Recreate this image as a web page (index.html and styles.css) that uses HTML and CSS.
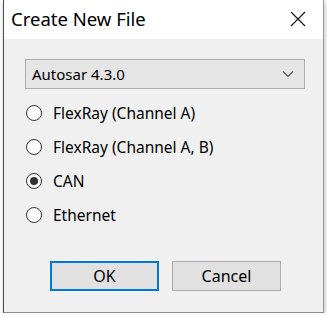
FILE: index.html
```html
<!DOCTYPE html>
<html lang="en">

<head>
    <meta charset="UTF-8">
    <meta name="viewport" content="width=device-width, initial-scale=1.0">
    <title>Create New File</title>
    <link rel="stylesheet" href="styles.css">
</head>

<body>
    <div class="window">
        <div class="titlebar">
            <span class="title">Create New File</span>
            <button class="close" aria-label="Close">
                <svg width="16" height="16" viewBox="0 0 16 16">
                    <path d="M1 1 L15 15 M15 1 L1 15" stroke="#111" stroke-width="1.1" fill="none" />
                </svg>
            </button>
        </div>

        <div class="content">
            <div class="combo">
                <span>Autosar 4.3.0</span>
                <svg class="chevron" width="12" height="8" viewBox="0 0 12 8">
                    <path d="M1 1.5 L6 6.5 L11 1.5" stroke="#555" stroke-width="1.2" fill="none" />
                </svg>
            </div>

            <div class="options">
                <label class="option"><span class="radio"></span>FlexRay (Channel A)</label>
                <label class="option"><span class="radio"></span>FlexRay (Channel A, B)</label>
                <label class="option"><span class="radio checked"></span>CAN</label>
                <label class="option"><span class="radio"></span>Ethernet</label>
            </div>

            <div class="buttons">
                <button class="btn default">OK</button>
                <button class="btn">Cancel</button>
            </div>
        </div>
    </div>
</body>

</html>
```

FILE: styles.css
```css
body {
    margin: 0;
    background-color: #ffffff;
    font-family: "Noto Sans", "Open Sans", sans-serif;
}

.window {
    margin-left: 3px;
    width: 319px;
    height: 312px;
    border-left: 1px solid #4a4a4a;
    border-right: 1px solid #9a9a9a;
    border-bottom: 1px solid #8a8a8a;
    box-shadow: 1px 2px 5px rgba(0, 0, 0, 0.25);
    display: flex;
    flex-direction: column;
}

.titlebar {
    height: 39px;
    background-color: #ffffff;
    display: flex;
    align-items: center;
    justify-content: space-between;
    padding-left: 7px;
    padding-right: 17px;
}

.title {
    font-size: 18.5px;
    color: #000;
    margin-top: -3px;
}

.close {
    border: none;
    background: none;
    padding: 0;
    width: 16px;
    height: 16px;
    margin-top: -2px;
}

.content {
    flex: 1;
    background-color: #f0f0f0;
    padding: 20px 18px 0 21px;
}

.combo {
    height: 28px;
    border: 1px solid #adadad;
    background-color: #e5e5e5;
    display: flex;
    align-items: center;
    justify-content: space-between;
    padding: 0 10px 0 6px;
    font-size: 15px;
    color: #000;
}

.options {
    margin-top: 7px;
}

.option {
    height: 34px;
    display: flex;
    align-items: center;
    font-size: 15.5px;
    color: #000;
    padding-left: 1px;
}

.radio {
    width: 14px;
    height: 14px;
    border: 1px solid #333;
    border-radius: 50%;
    background-color: #fff;
    margin-right: 11px;
    display: flex;
    align-items: center;
    justify-content: center;
}

.radio.checked::after {
    content: "";
    width: 8px;
    height: 8px;
    border-radius: 50%;
    background-color: #333;
}

.buttons {
    margin-top: 29px;
    display: flex;
    gap: 13px;
    padding-left: 25px;
}

.btn {
    width: 109px;
    height: 30px;
    border: 1px solid #adadad;
    background-color: #e1e1e1;
    font-family: inherit;
    font-size: 16px;
    color: #000;
    padding: 0;
}

.btn.default {
    border: 2px solid #0078d7;
}
```
